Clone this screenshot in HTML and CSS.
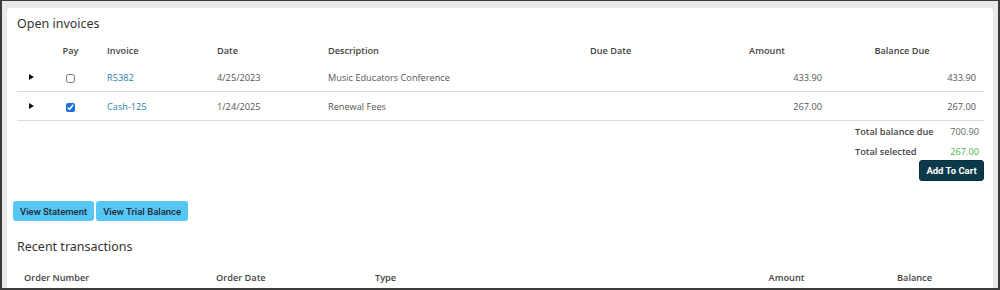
FILE: index.html
```html
<!DOCTYPE html>
<html lang="en">
<head>
<meta charset="utf-8">
<title>Open invoices</title>
<link rel="stylesheet" href="styles.css">
</head>
<body>
<div class="frame">
  <div class="panel">
    <h2 class="section-title">Open invoices</h2>
    <table class="grid invoices">
      <colgroup>
        <col class="c-exp"><col class="c-pay"><col class="c-inv"><col class="c-date"><col class="c-desc"><col class="c-due"><col class="c-amt"><col class="c-bal">
      </colgroup>
      <thead>
        <tr>
          <th></th>
          <th class="center">Pay</th>
          <th>Invoice</th>
          <th>Date</th>
          <th>Description</th>
          <th>Due Date</th>
          <th class="center">Amount</th>
          <th class="center bal">Balance Due</th>
        </tr>
      </thead>
      <tbody>
        <tr>
          <td class="exp"><span class="tri"></span></td>
          <td class="center"><input type="checkbox" class="chk"></td>
          <td><a class="link" href="#">R5382</a></td>
          <td>4/25/2023</td>
          <td>Music Educators Conference</td>
          <td></td>
          <td class="num">433.90</td>
          <td class="num">433.90</td>
        </tr>
        <tr>
          <td class="exp"><span class="tri"></span></td>
          <td class="center"><input type="checkbox" class="chk" checked></td>
          <td><a class="link" href="#">Cash-125</a></td>
          <td>1/24/2025</td>
          <td>Renewal Fees</td>
          <td></td>
          <td class="num">267.00</td>
          <td class="num">267.00</td>
        </tr>
      </tbody>
    </table>
    <div class="totals">
      <div class="total-row"><span class="total-label">Total balance due</span><span class="total-value">700.90</span></div>
      <div class="total-row"><span class="total-label">Total selected</span><span class="total-value green">267.00</span></div>
      <div class="cart-row"><button class="btn-dark">Add To Cart</button></div>
    </div>
    <div class="actions">
      <button class="btn-light">View Statement</button>
      <button class="btn-light">View Trial Balance</button>
    </div>
    <h2 class="section-title recent">Recent transactions</h2>
    <table class="grid transactions">
      <colgroup>
        <col class="t-num"><col class="t-date"><col class="t-type"><col class="t-amt"><col class="t-bal">
      </colgroup>
      <thead>
        <tr>
          <th class="pad">Order Number</th>
          <th>Order Date</th>
          <th>Type</th>
          <th class="center">Amount</th>
          <th class="center">Balance</th>
        </tr>
      </thead>
    </table>
  </div>
</div>
</body>
</html>
```
FILE: styles.css
```css
html, body {
  margin: 0;
  padding: 0;
}
body {
  background: #3b3b3b;
  font-family: "Open Sans", "Noto Sans", sans-serif;
}
.frame {
  box-sizing: border-box;
  width: 1000px;
  height: 290px;
  border: 2px solid #3b3b3b;
  border-top-width: 1px;
  border-right-width: 2px;
  background: #e9e9e9;
  padding: 7px 5px 0 5px;
  overflow: hidden;
}
.panel {
  background: #fff;
  border-radius: 4px 4px 0 0;
  height: 100%;
  box-sizing: border-box;
  padding: 6px 9px 0 10px;
}
.section-title {
  margin: 0;
  font-family: "Noto Sans", sans-serif;
  font-weight: 400;
  font-size: 12.5px;
  line-height: 20px;
  color: #333;
}
.grid {
  width: 100%;
  border-collapse: collapse;
  table-layout: fixed;
  font-size: 9.2px;
  color: #555;
}
.invoices {
  margin-top: 3px;
}
.grid th {
  font-weight: 600;
  color: #444;
  text-align: left;
  height: 26px;
  padding: 0 6px;
  vertical-align: middle;
}
.grid td {
  height: 28px;
  padding: 0 6px;
  vertical-align: middle;
  border-bottom: 1px solid #dcdcdc;
}
.c-exp { width: 23px; }
.c-pay { width: 61px; }
.c-inv { width: 110px; }
.c-date { width: 111px; }
.c-desc { width: 262px; }
.c-due { width: 122px; }
.c-amt { width: 122px; }
.c-bal { width: 156px; }
.grid .center { text-align: center; }
.grid th.bal { padding: 0 8px 0 0; }
.grid td.num { text-align: right; }
.grid td.num:last-child { padding-right: 8px; }
.grid td.exp { padding: 0 0 0 12px; }
.tri {
  display: block;
  width: 0;
  height: 0;
  border-left: 5px solid #111;
  border-top: 3px solid transparent;
  border-bottom: 3px solid transparent;
}
.chk {
  width: 9px;
  height: 9px;
  margin: 0;
  vertical-align: middle;
  accent-color: #1a6fe0;
}
.link {
  color: #2a7fab;
  text-decoration: none;
}
.totals {
  display: flex;
  flex-direction: column;
  align-items: flex-end;
}
.total-row {
  display: flex;
  justify-content: space-between;
  width: 124px;
  height: 20px;
  align-items: center;
  font-size: 9.2px;
  margin-right: 5px;
}
.total-label {
  font-weight: 600;
  color: #444;
}
.total-value {
  color: #666;
}
.total-value.green {
  color: #4cb84c;
}
.cart-row {
  display: flex;
  margin-top: -1px;
}
.btn-dark {
  font-family: "Roboto", "Inter", sans-serif;
  background: #0c3a4a;
  color: #fff;
  border: 1px solid #07303e;
  border-radius: 3px;
  height: 21px;
  width: 65px;
  padding: 0;
  font-size: 9.5px;
  font-weight: 700;
}
.actions {
  display: flex;
  gap: 2px;
  margin: 20px 0 0 -4px;
}
.btn-light {
  font-family: "Roboto", "Inter", sans-serif;
  background: #56c6f5;
  color: #1d2a35;
  border: none;
  border-radius: 3px;
  height: 20px;
  padding: 0 7px;
  font-size: 9.5px;
  font-weight: 500;
}
.recent {
  margin-top: 16px;
}
.transactions {
  margin-top: 7px;
}
.t-num { width: 193px; }
.t-date { width: 159px; }
.t-type { width: 359px; }
.t-amt { width: 117px; }
.t-bal { width: 139px; }
.transactions th.pad { padding-left: 7px; }
```
